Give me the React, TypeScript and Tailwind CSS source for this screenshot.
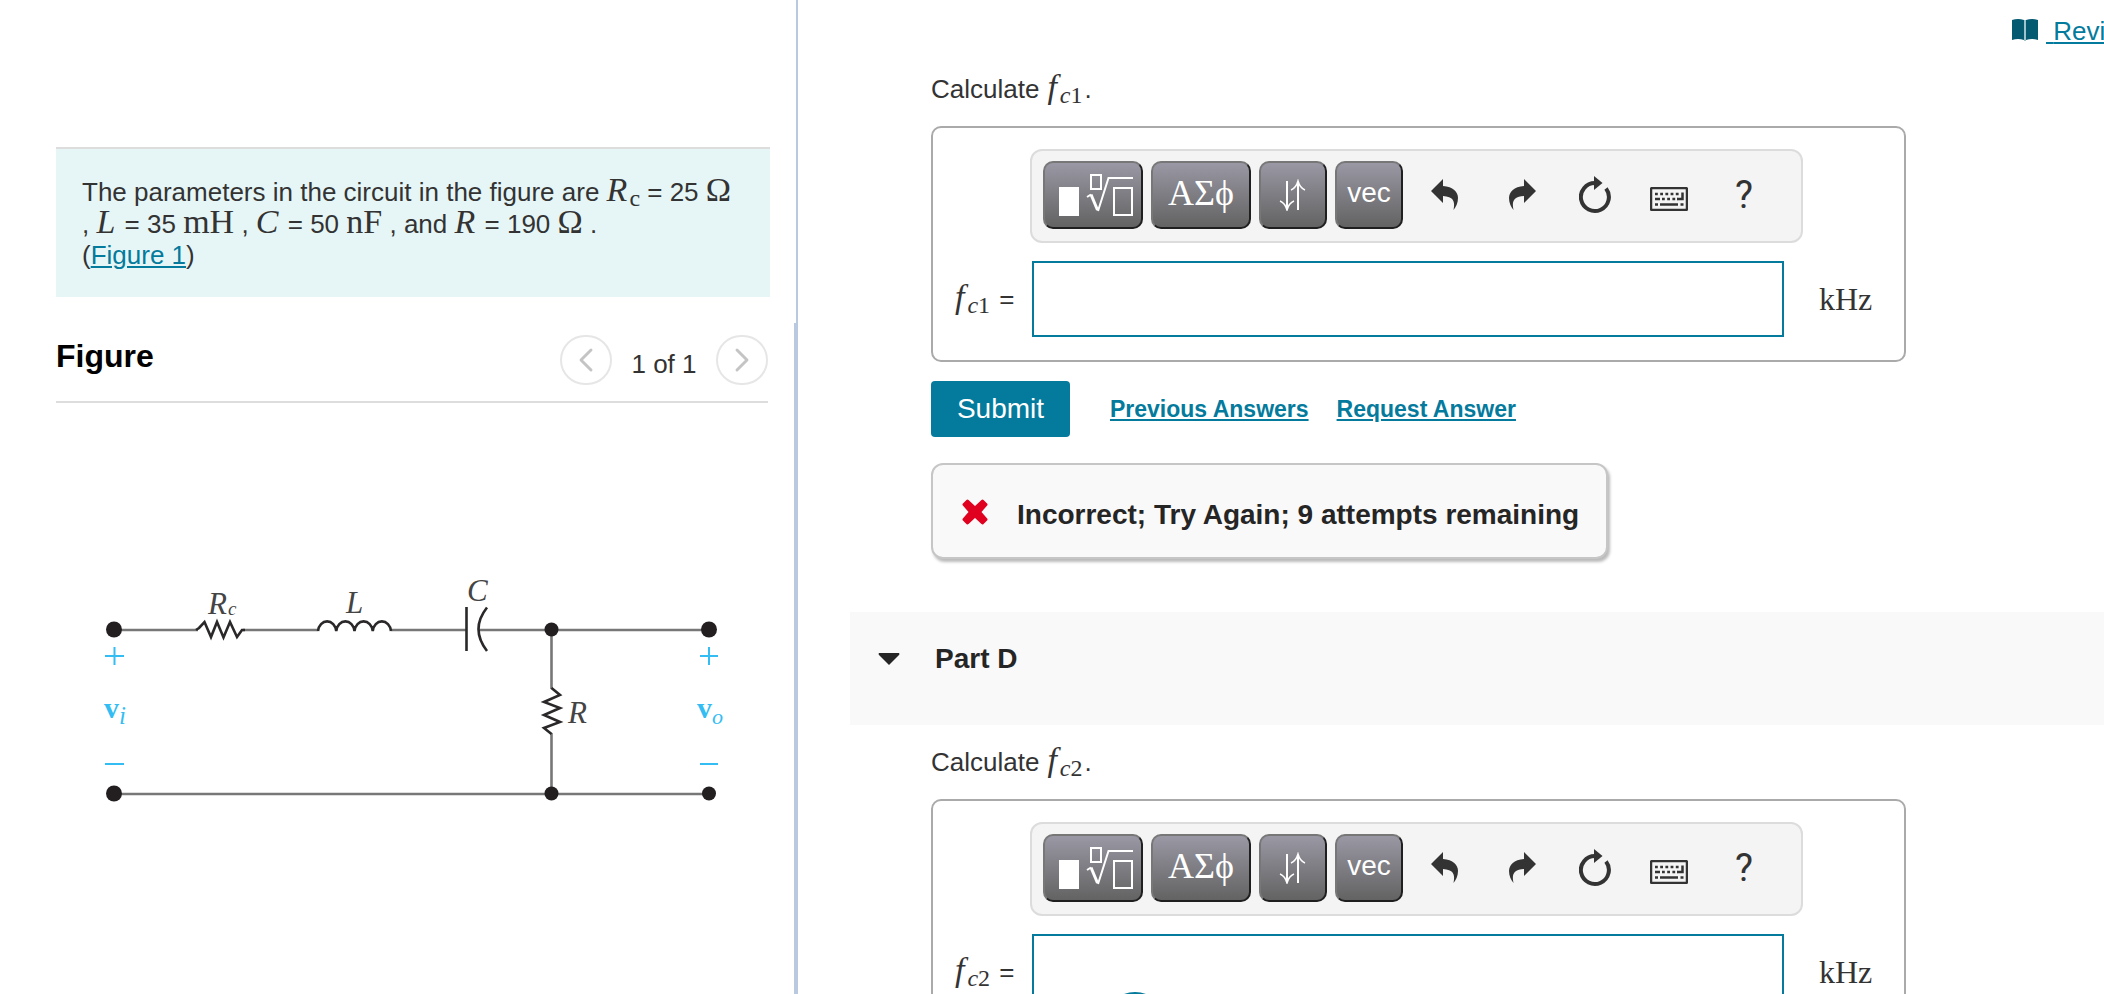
import React from 'react';
import { ChevronLeft, ChevronRight } from 'lucide-react';

const INK = '#2b2829';
const WIRE = '#777777';
const CYAN = '#34bdf3';

const MathText = ({ children, italic = false }: { children: React.ReactNode; italic?: boolean }) => (
  <span className={`font-["Liberation_Serif",serif] text-[34px] leading-none ${italic ? 'pr-0.5 italic' : ''}`}>
    {children}
  </span>
);

const Frequency = ({ index }: { index: number }) => (
  <span className='font-["Liberation_Serif",serif] text-[34px] leading-none whitespace-nowrap'>
    <i>f</i>
    <sub className="bottom-[-5px] pr-0.5 pl-[3px] text-[24px] leading-none">
      <i>c</i>
      {index}
    </sub>
  </span>
);

const Circuit = () => (
  <svg viewBox="56 560 712 260" className="w-full" role="img" aria-label="RLC circuit">
    <g fill="none" stroke={WIRE} strokeWidth="2.6">
      <path d="M114 630H198M243 630H318M391 630H466M479 630H709" />
      <path d="M114 794H709M551.5 630V689M551.5 733V794" />
    </g>
    <g fill="none" stroke={INK} strokeWidth="2.6">
      <path d="M196 630L199 628L204.500 622L211 637L217 622L223.500 637.500L230 622L237 637L242 630H245" />
      <path d="M318 631A9.200 11 0 0 1 336.250 631A9.200 11 0 0 1 354.500 631A9.200 11 0 0 1 372.750 631A9.200 11 0 0 1 391 631" />
      <path d="M466.500 607V651M487 607.500Q470 629 487 651" />
      <path d="M551.500 688L560 695L544 702L560 708L544 715L560 722L544 728L551.500 734" />
    </g>
    <g fill="#231f20">
      <circle cx="114" cy="629.500" r="8" />
      <circle cx="114" cy="793.500" r="8" />
      <circle cx="551.500" cy="629.500" r="7" />
      <circle cx="551.500" cy="793.500" r="7" />
      <circle cx="709" cy="629.500" r="8" />
      <circle cx="709" cy="793.500" r="7" />
    </g>
    <g stroke={CYAN} strokeWidth="2">
      <path d="M105 656H124M114.500 647V665M105 764H124" />
      <path d="M700 656H718M709 647V665M700 764H718" />
    </g>
    <g fill="#444" fontFamily="Liberation Serif, serif" fontStyle="italic" fontSize="31">
      <text x="208" y="614">R</text>
      <text x="228" y="615" fontSize="19">c</text>
      <text x="346" y="613">L</text>
      <text x="467" y="601">C</text>
      <text x="568" y="723">R</text>
    </g>
    <g fill={CYAN} fontFamily="Liberation Serif, serif" fontWeight="bold" fontSize="30">
      <text x="104" y="718">v</text>
      <text x="697" y="718">v</text>
    </g>
    <g fill={CYAN} fontFamily="Liberation Serif, serif" fontStyle="italic" fontSize="25">
      <text x="119" y="724">i</text>
      <text x="712" y="724" fontSize="22">o</text>
    </g>
  </svg>
);

const TemplateIcon = () => (
  <svg width="76" height="44" viewBox="0 0 76 44" fill="none" stroke="#fff" strokeWidth="2" aria-hidden="true">
    <rect x="1" y="14" width="20" height="29" fill="#fff" stroke="none" />
    <rect x="33" y="2" width="10" height="14" />
    <path d="M29 24L33 21.500" />
    <path d="M33 21.500L39.500 37" strokeWidth="3" />
    <path d="M40 38L50.500 5H75" />
    <rect x="56" y="15" width="18" height="27" />
  </svg>
);

const ArrowsIcon = () => (
  <svg width="28" height="32" viewBox="0 0 28 32" fill="none" stroke="#fff" strokeWidth="2" aria-hidden="true">
    <path d="M8 2V30M19 31V3" />
    <path d="M1 22Q6 24 8 31Q10 24 15 22M12 11Q17 9 19 2Q21 9 26 11" strokeWidth="1.500" />
  </svg>
);

const UndoIcon = ({ flip = false }: { flip?: boolean }) => (
  <svg width="28" height="32" viewBox="0 0 28 32" className={flip ? '-scale-x-100' : ''} fill="#333" aria-hidden="true">
    <path d="M0 12L12 0V7C22 7.500 27 13 27 19C27 24 25 28 22.500 31C24.500 22 22 17.500 12 17V24Z" />
  </svg>
);

const ResetIcon = () => (
  <svg width="32" height="38" viewBox="0 0 32 38" aria-hidden="true">
    <path d="M27 12.500A14 14 0 1 1 16 7" fill="none" stroke="#333" strokeWidth="4" />
    <path d="M15 0L23.500 7L15 14Z" fill="#333" />
  </svg>
);

const KeyboardIcon = () => (
  <svg width="38" height="24" viewBox="0 0 38 24" fill="none" stroke="#333" strokeWidth="2.500" aria-hidden="true">
    <rect x="1" y="1" width="36" height="22" rx="1.500" strokeWidth="2.500" />
    <path d="M5 7H29" strokeDasharray="2.800 2.400" />
    <path d="M5 12H10" />
    <path d="M12 12H28" strokeDasharray="2.800 2.400" />
    <path d="M32.500 5.500V12H27" />
    <path d="M5 17.500H8M10 17.500H28M30.500 17.500H33.500" />
  </svg>
);

const keyClass =
  'flex h-[68px] items-center justify-center rounded-[10px] border-2 border-t-[#777] border-l-[#777] border-r-[#1f1f1f] border-b-[#1f1f1f] bg-linear-to-b from-[#9a98a4] to-[#636363] text-white';

const Toolbar = () => (
  <div className="flex h-[94px] w-[773px] items-center rounded-xl border-2 border-[#dcdcdc] bg-[#f4f4f4] pb-0.5 pl-[11px]">
    <div className="flex gap-2">
      <button className={`${keyClass} w-[100px] pl-1.5`} aria-label="Templates">
        <TemplateIcon />
      </button>
      <button className={`${keyClass} w-[100px] pb-1 font-["Liberation_Serif",serif] text-[36px]`}>ΑΣϕ</button>
      <button className={`${keyClass} w-[68px]`} aria-label="Subscript and superscript">
        <ArrowsIcon />
      </button>
      <button className={`${keyClass} w-[68px] pb-1 text-[28px]`}>vec</button>
    </div>
    <div className="ml-7 flex items-center">
      <button aria-label="Undo" className="w-[77px]"><UndoIcon /></button>
      <button aria-label="Redo" className="w-[71px]"><UndoIcon flip /></button>
      <button aria-label="Reset" className="w-[71px]"><ResetIcon /></button>
      <button aria-label="Keyboard" className="w-[85px] pt-2"><KeyboardIcon /></button>
      <button aria-label="Help" className="font-['Roboto',sans-serif] text-[38px] leading-none text-[#333]">?</button>
    </div>
  </div>
);

const AnswerPanel = ({ index }: { index: number }) => (
  <section className="mr-[198px] ml-[81px]">
    <p className="flex h-14 items-baseline gap-2 text-[26px] leading-9">
      <span>Calculate</span>
      <span>
        <Frequency index={index} />.
      </span>
    </p>
    <div className="h-[236px] rounded-[10px] border-2 border-[#aaa] pt-[21px]">
      <div className="pl-[97px]">
        <Toolbar />
      </div>
      <div className="mt-[18px] flex items-center">
        <label htmlFor={`answer-${index}`} className="w-[99px] pl-[22px] text-[26px] whitespace-nowrap">
          <Frequency index={index} /> =
        </label>
        <input
          id={`answer-${index}`}
          type="text"
          className="h-[76px] min-w-0 flex-1 border-2 border-[#047a9c] bg-white px-3 text-[28px] outline-none"
        />
        <span className='w-[120px] pl-[35px] font-["Liberation_Serif",serif] text-[32px] leading-none'>kHz</span>
      </div>
    </div>
  </section>
);

const Sidebar = () => (
  <aside className="flex w-[798px] shrink-0 flex-col">
    <div className="flex h-[323px] flex-col border-r-2 border-[#b9c9df] pt-[147px] pr-[26px] pl-14">
      <div className="h-[150px] border-t-2 border-[#ddd] bg-[#e6f6f7] pt-6 pl-[26px] text-[26px] leading-8 text-[#333]">
        <p className="h-8 whitespace-nowrap">
          The parameters in the circuit in the figure are <MathText italic>R</MathText>
          <sub className='bottom-[-5px] font-["Liberation_Serif",serif] text-[24px] leading-none'>c</sub> = 25{' '}
          <MathText>Ω</MathText>
        </p>
        <p className="h-8 whitespace-nowrap">
          , <MathText italic>L</MathText> = 35 <MathText>mH</MathText> , <MathText italic>C</MathText> = 50{' '}
          <MathText>nF</MathText> , and <MathText italic>R</MathText> = 190 <MathText>Ω</MathText> .
        </p>
        <p className="pt-0.5">
          (<a href="#figure-1" className="text-[#047a9c] underline underline-offset-2">Figure 1</a>)
        </p>
      </div>
    </div>
    <div className="flex-1 border-r-4 border-[#b9c9df] pr-[26px] pl-14">
      <div className="flex h-20 items-center justify-between border-b-2 border-[#ddd]">
        <h2 className="pb-3 text-[32px] leading-10 font-bold text-black">Figure</h2>
        <div className="flex items-center pb-4 pt-3">
          <button
            aria-label="Previous figure"
            className="flex h-[50px] w-[52px] items-center justify-center rounded-full border-2 border-[#e6e6e6] text-[#c4c4c4]"
          >
            <ChevronLeft size={40} strokeWidth={1.75} />
          </button>
          <span className="w-[104px] pt-2 text-center text-[26px]">1 of 1</span>
          <button
            aria-label="Next figure"
            className="flex h-[50px] w-[52px] items-center justify-center rounded-full border-2 border-[#e6e6e6] text-[#c4c4c4]"
          >
            <ChevronRight size={40} strokeWidth={1.75} />
          </button>
        </div>
      </div>
      <div id="figure-1" className="pt-[157px]">
        <Circuit />
      </div>
    </div>
  </aside>
);

export default function App() {
  return (
    <div className='relative flex h-screen overflow-hidden bg-white font-["Liberation_Sans",Arial,sans-serif] text-[#333]'>
      <Sidebar />
      <main className="min-w-0 flex-1 pl-[52px]">
        <div className="flex h-[70px] justify-end pt-[15px]">
          <div className="flex w-[92px] gap-2 overflow-hidden">
            <svg width="26" height="22" viewBox="0 0 26 22" className="mt-1 shrink-0" aria-hidden="true">
              <path d="M0 1Q6-1 12 1V21Q6 19 0 21ZM14 1Q20-1 26 1V21Q20 19 14 21Z" fill="#045a70" />
              <path d="M13 1V22" stroke="#9fc3cd" strokeWidth="2" />
            </svg>
            <a href="#review" className="text-[26px] leading-8 whitespace-pre text-[#047a9c] underline underline-offset-2">
              {' '}Review
            </a>
          </div>
        </div>

        <AnswerPanel index={1} />

        <div className="mt-[19px] ml-[81px] flex items-center">
          <button className="h-14 w-[139px] rounded bg-[#047a9c] text-[28px] text-white">Submit</button>
          <a href="#previous" className="ml-10 text-[23px] font-bold text-[#047a9c] underline underline-offset-2">
            Previous Answers
          </a>
          <a href="#request" className="ml-7 text-[23px] font-bold text-[#047a9c] underline underline-offset-2">
            Request Answer
          </a>
        </div>

        <div className="mt-[26px] ml-[81px] flex h-24 w-[677px] items-center rounded-xl border-2 border-[#c6c6c6] bg-[#f9f9f9] pt-0.5 pl-7 shadow-[2px_3px_3px_#bbb]">
          <svg width="28" height="28" viewBox="0 0 28 28" className="shrink-0" aria-hidden="true">
            <path
              d="M6.500 3L14 10L21.500 3L25 6.500L18.500 14L25 21.500L21.500 25L14 18L6.500 25L3 21.500L9.500 14L3 6.500Z"
              fill="#e0001f"
              stroke="#e0001f"
              strokeWidth="3"
              strokeLinejoin="round"
            />
          </svg>
          <p className="ml-7 pt-1.5 text-[28px] font-bold whitespace-nowrap text-[#252525]">
            Incorrect; Try Again; 9 attempts remaining
          </p>
        </div>

        <button className="mt-[53px] flex h-[113px] w-full items-center bg-[#f9f9f9] pb-5 pl-7 text-[28px] font-bold text-[#252525]">
          <svg width="22" height="12" viewBox="0 0 22 12" aria-hidden="true">
            <path d="M1 0H21Q22 1 21 2L11 12L1 2Q0 1 1 0Z" fill="#252525" />
          </svg>
          <span className="ml-[35px]">Part D</span>
        </button>

        <div className="pt-[18px]">
          <AnswerPanel index={2} />
        </div>
      </main>

      {/* Floating control peeking over the bottom edge */}
      <div className="absolute bottom-[-60px] left-[1104px] size-[62px] rounded-full bg-[#047a9c]" />
    </div>
  );
}
